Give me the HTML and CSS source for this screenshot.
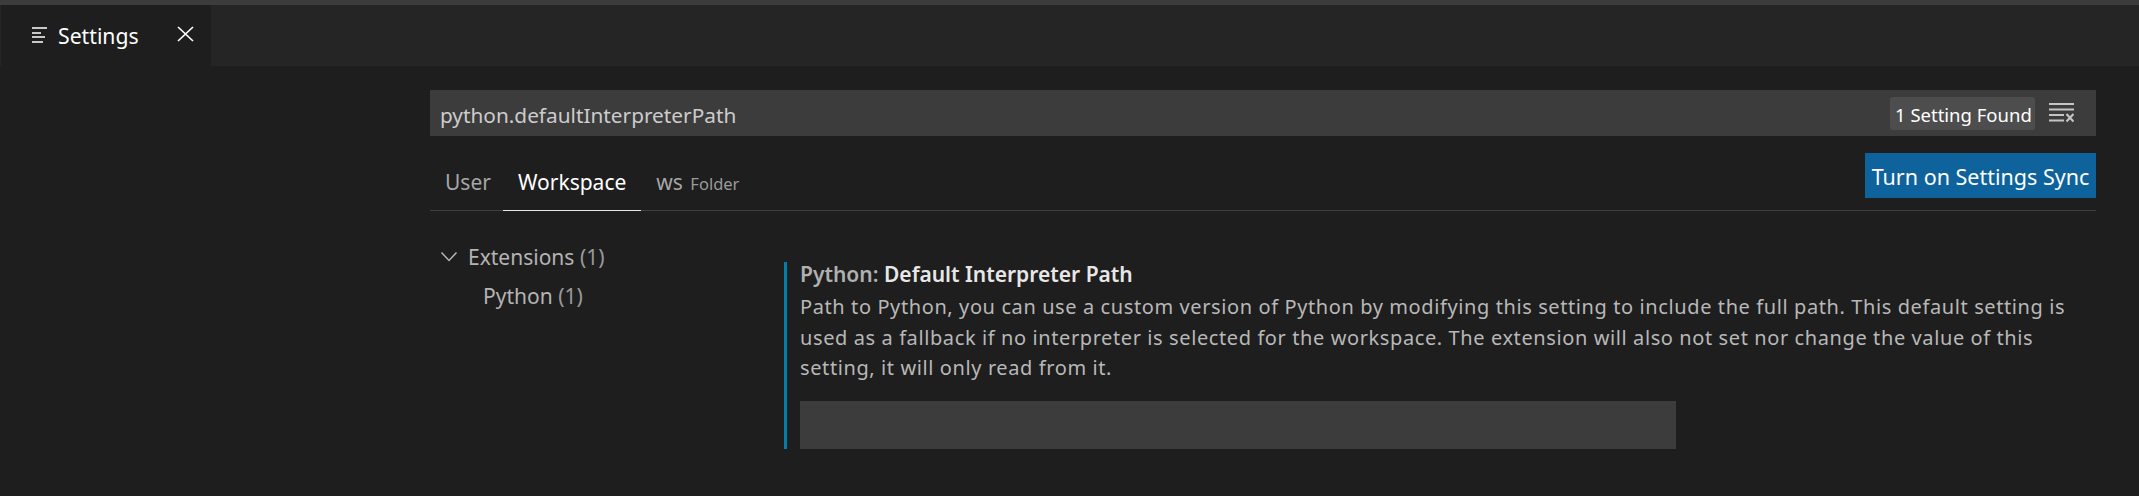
FILE: index.html
```html
<!DOCTYPE html>
<html lang="en">
<head>
<meta charset="utf-8">
<title>Settings</title>
<link rel="stylesheet" href="styles.css">
</head>
<body>
<div class="titlebar"></div>
<div class="tabstrip">
  <div class="tab">
    <svg class="tab-icon" width="15" height="16" viewBox="0 0 15 16"><g fill="#c8c8c8"><rect x="0" y="0" width="15" height="2"/><rect x="0" y="5" width="9" height="2"/><rect x="0" y="9" width="13" height="2"/><rect x="0" y="14" width="11" height="2"/></g></svg>
    <span class="tab-label">Settings</span>
    <svg class="tab-close" width="17" height="16" viewBox="0 0 17 16"><path d="M1 1 L16 15 M16 1 L1 15" stroke="#fff" stroke-width="1.7" fill="none"/></svg>
  </div>
</div>
<main class="editor">
  <div class="search">
    <span class="search-text">python.defaultInterpreterPath</span>
    <span class="count">1 Setting Found</span>
    <svg class="clear" width="25" height="20" viewBox="0 0 25 20"><g fill="#c5c5c5"><rect x="0" y="0" width="25" height="2"/><rect x="0" y="5.500" width="25" height="2"/><rect x="0" y="11" width="15" height="2"/><rect x="0" y="16.500" width="15" height="2"/></g><path d="M17.500 11 L24.500 18.500 M24.500 11 L17.500 18.500" stroke="#c5c5c5" stroke-width="2.200" fill="none"/></svg>
  </div>
  <div class="scopebar">
    <nav class="scopes">
      <span class="scope first">User</span>
      <span class="scope active">Workspace</span>
      <span class="scope">ws <small class="scope-sub">Folder</small></span>
    </nav>
    <button class="sync">Turn on Settings Sync</button>
  </div>
  <div class="content">
    <aside class="toc">
      <div class="toc-row">
        <svg class="chevron" width="18" height="12" viewBox="0 0 18 12"><path d="M1.500 1.500 L9 9.500 L16.500 1.500" stroke="#b5b5b5" stroke-width="1.500" fill="none"/></svg>
        <span>Extensions <span class="num">(1)</span></span>
      </div>
      <div class="toc-row child"><span>Python <span class="num">(1)</span></span></div>
    </aside>
    <section class="setting">
      <div class="setting-title"><span class="cat">Python: </span>Default Interpreter Path</div>
      <p class="desc">Path to Python, you can use a custom version of Python by modifying this setting to include the full path. This default setting is used as a fallback if no interpreter is selected for the workspace. The extension will also not set nor change the value of this setting, it will only read from it.</p>
      <div class="value-input"></div>
    </section>
  </div>
</main>
</body>
</html>
```
FILE: styles.css
```css
* { box-sizing: border-box; }
html, body { margin: 0; height: 100%; }
body {
  background: #1e1e1e;
  color: #cccccc;
  font-family: "Noto Sans", "Open Sans", sans-serif;
  font-size: 20px;
  overflow: hidden;
}
.titlebar { height: 5px; background: #3c3c3c; }
.tabstrip { height: 61px; background: #252526; display: flex; }
.tab {
  width: 210px;
  margin-left: 1px;
  background: #1e1e1e;
  display: flex;
  align-items: center;
  padding-left: 31px;
  color: #fff;
}
.tab-icon { flex: none; margin-top: -2px; }
.tab-label { margin-left: 11px; font-size: 21.200px; }
.tab-close { margin-left: 38px; margin-top: -4px; flex: none; }
.editor { padding: 24px 43px 0 430px; }
.search {
  height: 46px;
  background: #3c3c3c;
  display: flex;
  align-items: center;
  padding-left: 10px;
}
.search-text { flex: 1; font-size: 20.800px; padding-top: 3px; }
.count {
  background: #4d4d4d;
  color: #fff;
  border-radius: 3px;
  height: 33px;
  line-height: 35px;
  padding: 0 5px;
  width: 145px;
  white-space: nowrap;
  font-size: 18.500px;
}
.clear { margin: 0 22px 0 14px; }
.scopebar {
  margin-top: 17px;
  height: 58px;
  border-bottom: 1px solid #3f3f3f;
  display: flex;
  justify-content: space-between;
  align-items: flex-start;
}
.scopes { display: flex; height: 58px; }
.scope {
  color: #a6a6a6;
  padding: 13px 15px 0;
  line-height: 32px;
  font-size: 21px;
  white-space: nowrap;
}
.scope.first { padding-right: 12px; }
.scope.active {
  color: #fff;
  border-bottom: 1px solid #e7e7e7;
  height: 58px;
}
.scope-sub { font-size: 16.500px; color: #9a9a9a; margin-left: 2px; }
.sync {
  width: 231px;
  height: 45px;
  border: 0;
  padding: 2px 0 0;
  background: #0e639c;
  color: #fff;
  font: inherit;
  font-size: 21.500px;
  white-space: nowrap;
}
.content { display: flex; }
.toc { width: 354px; padding-top: 26px; flex: none; color: #b4b4b4; font-size: 21px; }
.toc-row { height: 39px; display: flex; align-items: center; }
.toc-row .chevron { margin: 0 10px 0 10px; }
.toc-row.child { padding-left: 53px; height: 40px; }
.num { color: #999; }
.setting {
  margin-top: 51px;
  width: 1312px;
  flex: none;
  border-left: 3px solid #007fa8;
  padding-left: 13px;
}
.setting-title { font-size: 21px; font-weight: 600; color: #e7e7e7; line-height: 24px; }
.cat { color: #b0b0b0; }
.desc { margin: 6px 0 0; line-height: 30.700px; letter-spacing: 0.600px; color: #b8b8b8; }
.value-input { margin-top: 17px; width: 876px; height: 48px; background: #3c3c3c; }
```
